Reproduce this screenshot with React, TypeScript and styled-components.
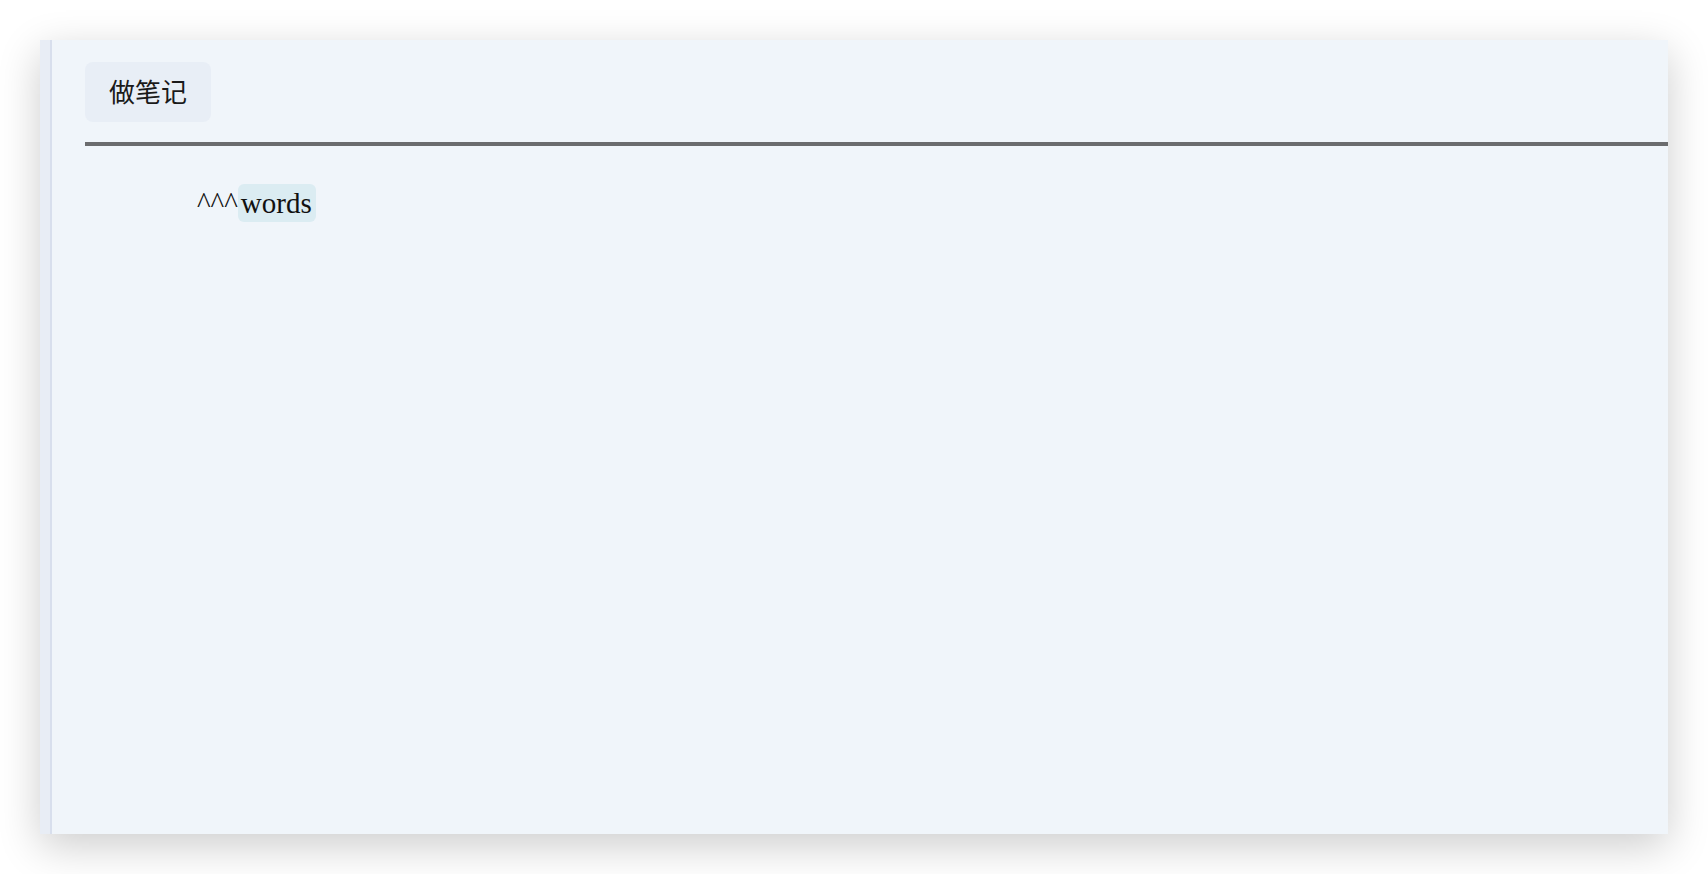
import React from "react";
import styled, { createGlobalStyle } from "styled-components";

const Global = createGlobalStyle`
  html, body { margin: 0; padding: 0; background: #ffffff; }
  body { font-family: "Liberation Serif", "Noto Sans CJK SC", serif; }
`;

const Page = styled.div`
  width: 1708px;
  height: 874px;
  box-sizing: border-box;
  padding: 40px 40px 0 40px;
`;

const Card = styled.div`
  display: flex;
  width: 1628px;
  height: 794px;
  background: #f0f5fa;
  box-shadow: 0 12px 40px rgba(0, 0, 0, 0.2);
`;

const SideStrip = styled.div`
  flex: 0 0 10px;
  background: #e8edf5;
  border-right: 2px solid #d8dfed;
`;

const Main = styled.div`
  flex: 1;
  display: flex;
  flex-direction: column;
  padding: 22px 0 0 33px;
`;

const Toolbar = styled.div`
  display: flex;
  align-items: center;
`;

const NoteButton = styled.button`
  height: 60px;
  padding: 0 24px 3px;
  border: none;
  border-radius: 8px;
  background: #e8eef6;
  color: #1a1a1a;
  font-family: "Noto Sans CJK SC", "Noto Sans", sans-serif;
  font-size: 26px;
  cursor: pointer;
`;

const Divider = styled.div`
  height: 4px;
  margin-top: 20px;
  background: #6b6c6e;
`;

const Content = styled.div`
  padding: 41px 0 0 112px;
  font-family: "Liberation Serif", "Noto Sans CJK SC", serif;
  font-size: 29px;
  color: #111111;
`;

const Mark = styled.span`
  background: #dbecf2;
  border-radius: 6px;
  padding: 3px 4px 3px 3px;
`;

export default function App() {
  return (
    <>
      <Global />
      <Page>
        <Card>
          <SideStrip />
          <Main>
            <Toolbar>
              <NoteButton>做笔记</NoteButton>
            </Toolbar>
            <Divider />
            <Content>
              ^^^<Mark>words</Mark>
            </Content>
          </Main>
        </Card>
      </Page>
    </>
  );
}
